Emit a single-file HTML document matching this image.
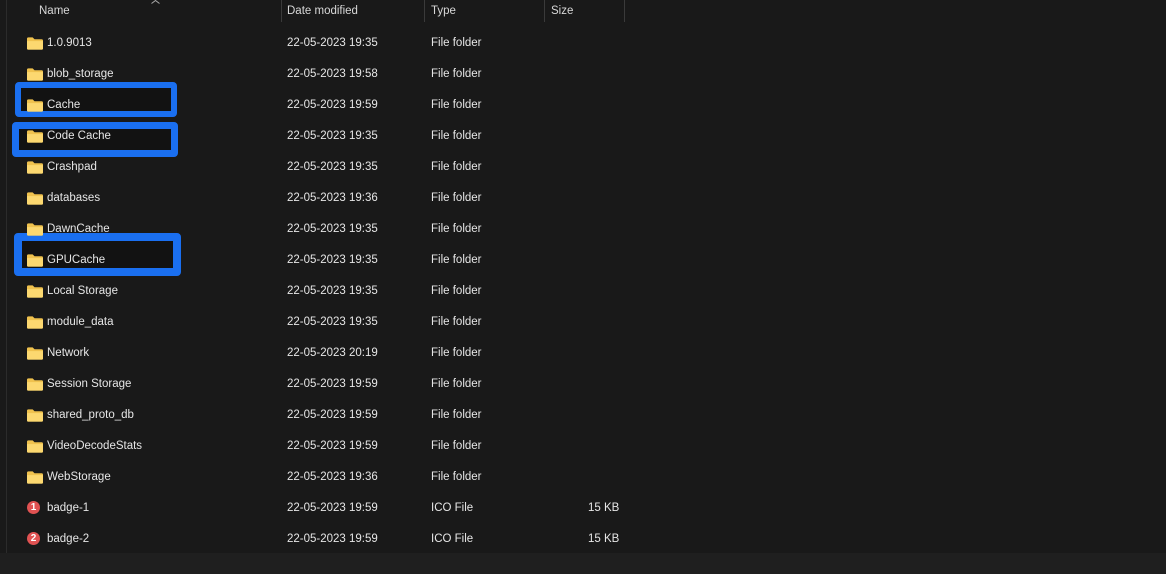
<!DOCTYPE html>
<html><head><meta charset="utf-8"><style>
html,body{margin:0;padding:0;width:1166px;height:574px;overflow:hidden;background:#191919;font-family:"Liberation Sans",sans-serif;font-size:11.5px;color:#e6e6e6}
.pane{position:absolute;left:0;top:0;width:1166px;height:553px;background:#191919}
.bottom{position:absolute;left:0;top:553px;width:1166px;height:21px;background:#1f1f1f}
.lline{position:absolute;left:6px;top:0;width:1px;height:553px;background:#2b2b2b}
.div{position:absolute;top:0;width:1px;height:22px;background:#3a3a3a}
.h{position:absolute;top:5px;color:#d8d8d8}
.row{position:absolute;left:0;height:20px;width:700px}
.row span{position:absolute;top:0;line-height:20px;white-space:nowrap}
.fold{position:absolute;left:27px;top:4px;width:16px;height:13px}
.badge{position:absolute;left:27px;top:3px;width:13px;height:13px;border-radius:50%;background:#e05252;color:#fff;font-size:10px;font-weight:bold;line-height:13px;text-align:center}
.box{position:absolute;border:6px solid #1a6ff0;border-radius:4px;background:#121212}
</style></head><body>
<div class="pane"></div>
<div class="bottom"></div>
<div class="lline"></div>
<div class="h" style="left:39px">Name</div>
<svg style="position:absolute;left:151px;top:0" width="9" height="4" viewBox="0 0 9 4"><path d="M0.5 3.5L4.5 0.5L8.5 3.5" stroke="#aaa" fill="none"/></svg>
<div class="div" style="left:281px"></div>
<div class="h" style="left:287px">Date modified</div>
<div class="div" style="left:424px"></div>
<div class="h" style="left:431px">Type</div>
<div class="div" style="left:544px"></div>
<div class="h" style="left:551px">Size</div>
<div class="div" style="left:624px"></div>

<div class="box" style="left:15px;top:82px;width:150px;height:23px"></div>
<div class="box" style="left:12px;top:122px;width:152px;height:21px;border-width:7px"></div>
<div class="box" style="left:14px;top:233px;width:151px;height:27px;border-width:8px"></div>

<div id="rows"></div>
<script>
var names=["1.0.9013","blob_storage","Cache","Code Cache","Crashpad","databases","DawnCache","GPUCache","Local Storage","module_data","Network","Session Storage","shared_proto_db","VideoDecodeStats","WebStorage"];
var dates=["19:35","19:58","19:59","19:35","19:35","19:36","19:35","19:35","19:35","19:35","20:19","19:59","19:59","19:59","19:36"];
var fold='<svg class="fold" viewBox="0 0 17 13"><path d="M0 1.5Q0 0 1.5 0H6L8 2H15.5Q17 2 17 3.5V11.5Q17 13 15.5 13H1.5Q0 13 0 11.5Z" fill="#f0c24e"/><path d="M0 4H17V11.5Q17 13 15.5 13H1.5Q0 13 0 11.5Z" fill="#fcd870"/></svg>';
var h="";
for(var i=0;i<17;i++){
 var y=33+31*i;
 h+='<div class="row" style="top:'+y+'px">';
 if(i<15){h+=fold+'<span style="left:47px">'+names[i]+'</span><span style="left:287px">22-05-2023 '+dates[i]+'</span><span style="left:431px">File folder</span>';}
 else{var n=i-14;h+='<div class="badge">'+n+'</div><span style="left:47px">badge-'+n+'</span><span style="left:287px">22-05-2023 19:59</span><span style="left:431px">ICO File</span><span style="left:588px">15 KB</span>';}
 h+='</div>';
}
document.getElementById("rows").innerHTML=h;
</script>
</body></html>
